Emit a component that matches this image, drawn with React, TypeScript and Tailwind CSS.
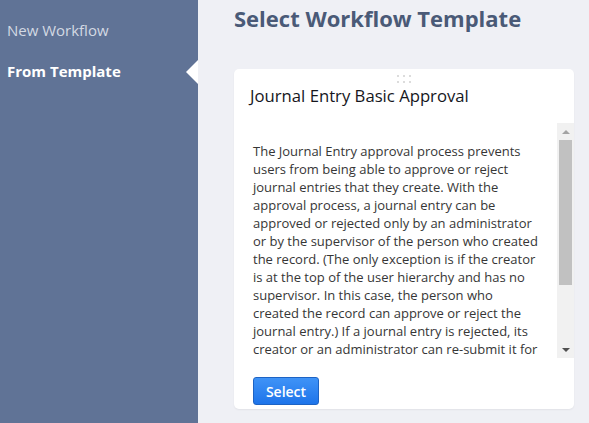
const DESCRIPTION =
  "The Journal Entry approval process prevents users from being able to approve or reject journal entries that they create. With the approval process, a journal entry can be approved or rejected only by an administrator or by the supervisor of the person who created the record. (The only exception is if the creator is at the top of the user hierarchy and has no supervisor. In this case, the person who created the record can approve or reject the journal entry.) If a journal entry is rejected, its creator or an administrator can re-submit it for approval.";

function Sidebar() {
  return (
    <div className="relative w-[198px] shrink-0 bg-[#607396] pt-[19px] text-[15px]">
      <div className="px-[7px] py-[1px] leading-[20px] text-[#d3d9e3]">New Workflow</div>
      <div className="mt-[20px] px-[7px] leading-[20px] font-bold text-white">From Template</div>
      <span className="absolute right-0 top-[60px] h-0 w-0 border-y-[12px] border-r-[12px] border-y-transparent border-r-white" />
    </div>
  );
}

function ScrollBar() {
  return (
    <div className="flex w-[17px] shrink-0 flex-col items-center bg-[#f1f1f1]">
      <div className="flex h-[17px] items-center justify-center">
        <span className="h-0 w-0 border-x-[4px] border-b-[4px] border-x-transparent border-b-[#a3a3a3]" />
      </div>
      <div className="h-[145px] w-[13px] bg-[#c1c1c1]" />
      <div className="flex-1" />
      <div className="flex h-[17px] items-center justify-center">
        <span className="h-0 w-0 border-x-[4px] border-t-[4px] border-x-transparent border-t-[#505050]" />
      </div>
    </div>
  );
}

function TemplateCard() {
  return (
    <div className="relative flex h-[340px] w-[340px] flex-col rounded-[5px] bg-white pl-[16px] shadow-[0_1px_2px_rgba(0,0,0,0.06)]">
      <div className="absolute left-[163px] top-[6px] grid grid-cols-3 gap-x-[4px] gap-y-[4px]">
        {[0, 1, 2, 3, 4, 5].map((i) => (
          <span key={i} className="h-[2px] w-[2px] bg-[#dcdcdc]" />
        ))}
      </div>
      <h2 className="pt-[16px] text-[16.7px] leading-[22px] text-[#15161c]">Journal Entry Basic Approval</h2>
      <div className="mt-[16px] flex h-[235px]">
        <p className="flex-1 overflow-hidden pl-[3px] pr-[17px] pt-[19px] text-[13px] leading-[18px] text-[#363636]">
          {DESCRIPTION}
        </p>
        <ScrollBar />
      </div>
      <div className="pl-[3px] pt-[19px]">
        <button
          type="button"
          className="h-[28px] w-[66px] rounded-[3px] border border-[#1d63c4] bg-gradient-to-b from-[#3f93f7] to-[#1d74ea] text-[14px] font-semibold text-white"
        >
          Select
        </button>
      </div>
    </div>
  );
}

export default function App() {
  return (
    <div className="flex h-[423px] w-[589px] overflow-hidden bg-[#eff0f5] font-['Open_Sans',sans-serif]">
      <Sidebar />
      <div className="flex flex-col pl-[36px]">
        <h1 className="pt-[4px] text-[22px] font-bold leading-[28px] text-[#4a5a77]">Select Workflow Template</h1>
        <div className="mt-[37px]">
          <TemplateCard />
        </div>
      </div>
    </div>
  );
}
